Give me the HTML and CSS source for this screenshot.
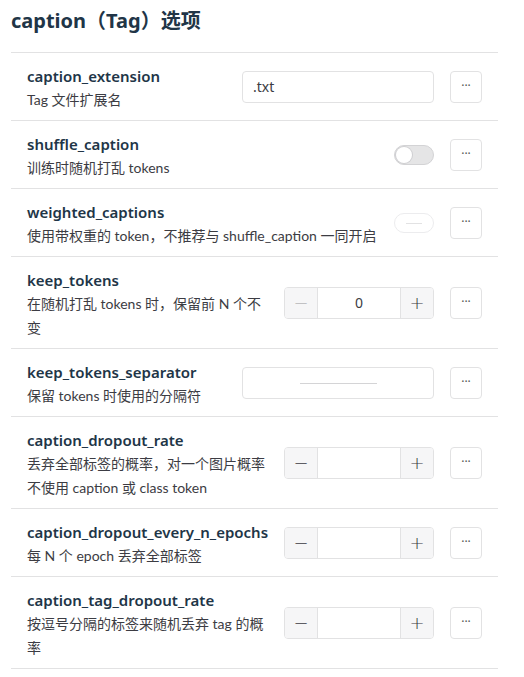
FILE: index.html
```html
<!DOCTYPE html>
<html lang="zh-CN">
<head>
<meta charset="utf-8">
<title>caption（Tag）选项</title>
<link rel="stylesheet" href="styles.css">
</head>
<body>
<div class="page">
  <h2 class="title">caption（Tag）选项</h2>
  <div class="list">
    <div class="row">
      <div class="info">
        <div class="name">caption_extension</div>
        <div class="desc">Tag 文件扩展名</div>
      </div>
      <div class="ctrl">
        <div class="text-input">.txt</div>
        <button class="more">···</button>
      </div>
    </div>
    <div class="row">
      <div class="info">
        <div class="name">shuffle_caption</div>
        <div class="desc">训练时随机打乱 tokens</div>
      </div>
      <div class="ctrl">
        <span class="switch"><span class="knob"></span></span>
        <button class="more">···</button>
      </div>
    </div>
    <div class="row">
      <div class="info">
        <div class="name">weighted_captions</div>
        <div class="desc">使用带权重的 token，不推荐与 shuffle_caption 一同开启</div>
      </div>
      <div class="ctrl">
        <span class="switch switch-loading"><span class="dash"></span></span>
        <button class="more">···</button>
      </div>
    </div>
    <div class="row">
      <div class="info">
        <div class="name">keep_tokens</div>
        <div class="desc">在随机打乱 tokens 时，保留前 N 个不变</div>
      </div>
      <div class="ctrl">
        <div class="number">
          <button class="step step-disabled">−</button>
          <span class="value">0</span>
          <button class="step">+</button>
        </div>
        <button class="more">···</button>
      </div>
    </div>
    <div class="row">
      <div class="info">
        <div class="name">keep_tokens_separator</div>
        <div class="desc">保留 tokens 时使用的分隔符</div>
      </div>
      <div class="ctrl">
        <div class="text-input text-center"><span class="sep-line"></span></div>
        <button class="more">···</button>
      </div>
    </div>
    <div class="row">
      <div class="info">
        <div class="name">caption_dropout_rate</div>
        <div class="desc">丢弃全部标签的概率，对一个图片概率不使用 caption 或 class token</div>
      </div>
      <div class="ctrl">
        <div class="number">
          <button class="step">−</button>
          <span class="value"></span>
          <button class="step">+</button>
        </div>
        <button class="more">···</button>
      </div>
    </div>
    <div class="row">
      <div class="info">
        <div class="name">caption_dropout_every_n_epochs</div>
        <div class="desc">每 N 个 epoch 丢弃全部标签</div>
      </div>
      <div class="ctrl">
        <div class="number">
          <button class="step">−</button>
          <span class="value"></span>
          <button class="step">+</button>
        </div>
        <button class="more">···</button>
      </div>
    </div>
    <div class="row">
      <div class="info">
        <div class="name">caption_tag_dropout_rate</div>
        <div class="desc">按逗号分隔的标签来随机丢弃 tag 的概率</div>
      </div>
      <div class="ctrl">
        <div class="number">
          <button class="step">−</button>
          <span class="value"></span>
          <button class="step">+</button>
        </div>
        <button class="more">···</button>
      </div>
    </div>
  </div>
</div>
</body>
</html>
```

FILE: styles.css
```css
html, body {
  margin: 0;
  padding: 0;
  background: #ffffff;
}

body {
  font-family: "Noto Sans", "Noto Sans CJK SC", sans-serif;
  color: #213547;
}

.page {
  width: 487px;
  padding: 0 0 0 11px;
}

.title {
  margin: 0;
  padding: 7px 0 0 0;
  height: 52px;
  box-sizing: border-box;
  font-size: 20px;
  line-height: 28px;
  font-weight: 700;
  color: #213547;
}

.list {
  border-top: 1px solid #e2e2e3;
}

.row {
  display: flex;
  align-items: center;
  gap: 12px;
  padding: 11px 16px 8px 16px;
  border-bottom: 1px solid #e2e2e3;
}

.info {
  flex: 1;
  min-width: 0;
}

.name {
  font-size: 15px;
  line-height: 24px;
  font-weight: 600;
  color: #213547;
  white-space: nowrap;
}

.desc {
  font-family: "Lato", "Noto Sans CJK SC", sans-serif;
  font-size: 14px;
  line-height: 24px;
  color: #3c3c43;
}

.ctrl {
  flex: none;
  display: flex;
  align-items: center;
  gap: 16px;
  margin-top: -2px;
}

.text-input {
  width: 192px;
  height: 32px;
  box-sizing: border-box;
  border: 1px solid #e2e2e3;
  border-radius: 4px;
  padding: 0 10px;
  font-size: 14px;
  line-height: 30px;
  color: #3c3c43;
  display: flex;
  align-items: center;
}

.text-center {
  justify-content: center;
}

.sep-line {
  display: block;
  width: 77px;
  height: 1px;
  background: #d4d4d6;
}

.more {
  width: 32px;
  height: 32px;
  box-sizing: border-box;
  border: 1px solid #e2e2e3;
  border-radius: 4px;
  background: #ffffff;
  padding: 0 0 2px 0;
  font-family: "Noto Sans", sans-serif;
  font-size: 12px;
  letter-spacing: 0;
  color: #555;
  line-height: 28px;
  text-align: center;
}

.switch {
  display: flex;
  align-items: center;
  width: 40px;
  height: 20px;
  box-sizing: border-box;
  border: 1px solid #d3d3d5;
  border-radius: 10px;
  background: #e5e5e6;
}

.knob {
  width: 16px;
  height: 16px;
  margin-left: 1px;
  border-radius: 50%;
  background: #ffffff;
  box-shadow: 0 0 0 1px #cfcfd2;
}

.switch-loading {
  background: #ffffff;
  border-color: #ececee;
  justify-content: center;
}

.dash {
  display: block;
  width: 16px;
  height: 1px;
  background: #e2e2e3;
}

.number {
  display: flex;
  width: 150px;
  height: 32px;
  box-sizing: border-box;
  border: 1px solid #e2e2e3;
  border-radius: 4px;
  overflow: hidden;
}

.step {
  flex: none;
  width: 33px;
  height: 30px;
  padding: 0;
  border: none;
  background: #f6f6f7;
  font-family: "DejaVu Sans", sans-serif;
  font-size: 18px;
  font-weight: 300;
  line-height: 30px;
  color: #3c3c43;
  text-align: center;
}

.step:first-child {
  border-right: 1px solid #e2e2e3;
}

.step:last-child {
  border-left: 1px solid #e2e2e3;
}

.step-disabled {
  color: #b5b5b8;
}

.value {
  flex: 1;
  text-align: center;
  font-size: 14px;
  line-height: 30px;
  color: #3c3c43;
}
```
